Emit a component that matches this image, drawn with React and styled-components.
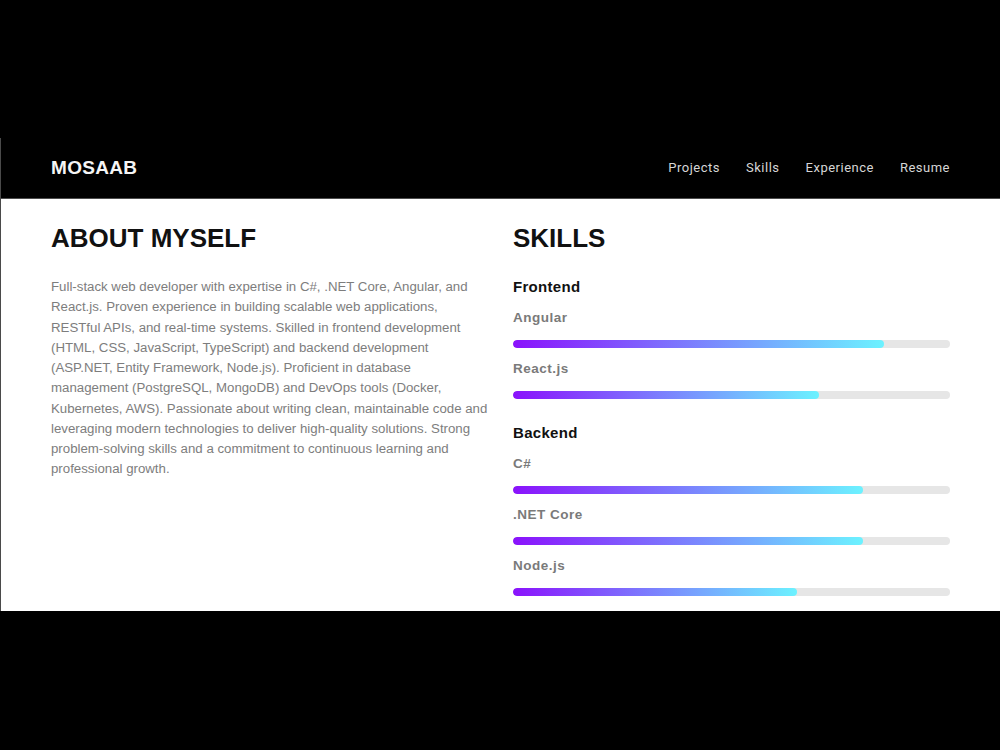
import React from 'react';
import styled, {createGlobalStyle} from "styled-components";

const skillGroups = [
    {
        title: 'Frontend',
        items: [
            {name: 'Angular', level: 85},
            {name: 'React.js', level: 70},
        ],
    },
    {
        title: 'Backend',
        items: [
            {name: 'C#', level: 80},
            {name: '.NET Core', level: 80},
            {name: 'Node.js', level: 65},
        ],
    },
];

const navLinks = ['Projects', 'Skills', 'Experience', 'Resume'];

function App() {
    return (
        <>
            <GlobalStyle/>
            <Frame>
                <Header>
                    <Logo>MOSAAB</Logo>
                    <Nav>
                        {navLinks.map((link) => (
                            <NavLink key={link} href="#">{link}</NavLink>
                        ))}
                    </Nav>
                </Header>
                <Main>
                    <Column>
                        <SectionTitle>ABOUT MYSELF</SectionTitle>
                        <About>
                            Full-stack web developer with expertise in C#, .NET Core, Angular, and
                            React.js. Proven experience in building scalable web applications,
                            RESTful APIs, and real-time systems. Skilled in frontend development
                            (HTML, CSS, JavaScript, TypeScript) and backend development
                            (ASP.NET, Entity Framework, Node.js). Proficient in database
                            management (PostgreSQL, MongoDB) and DevOps tools (Docker,
                            Kubernetes, AWS). Passionate about writing clean, maintainable code and
                            leveraging modern technologies to deliver high-quality solutions. Strong
                            problem-solving skills and a commitment to continuous learning and
                            professional growth.
                        </About>
                    </Column>
                    <Column>
                        <SectionTitle>SKILLS</SectionTitle>
                        <Groups>
                            {skillGroups.map((group) => (
                                <Group key={group.title}>
                                    <GroupTitle>{group.title}</GroupTitle>
                                    {group.items.map((skill) => (
                                        <Skill key={skill.name}>
                                            <SkillName>{skill.name}</SkillName>
                                            <Track>
                                                <Fill style={{width: `${skill.level}%`}}/>
                                            </Track>
                                        </Skill>
                                    ))}
                                </Group>
                            ))}
                        </Groups>
                    </Column>
                </Main>
            </Frame>
        </>
    );
}

const GlobalStyle = createGlobalStyle`
html, body {
margin: 0;
background: #000;
font-family: "Liberation Sans", Arial, sans-serif;
}
* {
box-sizing: border-box;
}
`;

const Frame = styled.div`
margin-top: 138px;
height: 473px;
overflow: hidden;
background: #fff;
border-left: 1px solid #4a4a4a;
display: flex;
flex-direction: column;
`;

const Header = styled.header`
height: 61px;
flex-shrink: 0;
background: #000;
border-bottom: 1px solid #4d4d4d;
display: flex;
align-items: center;
justify-content: space-between;
padding: 0 50px;
`;

const Logo = styled.div`
color: #f5f5f5;
font-size: 19px;
font-weight: bold;
letter-spacing: 0.3px;
`;

const Nav = styled.nav`
display: flex;
gap: 26px;
padding-bottom: 2px;
`;

const NavLink = styled.a`
color: #d6d6d6;
text-decoration: none;
font-family: Roboto, "Liberation Sans", sans-serif;
font-size: 13px;
letter-spacing: 0.5px;
`;

const Main = styled.main`
display: grid;
grid-template-columns: 1fr 1fr;
column-gap: 25px;
padding: 24px 50px 0;
`;

const Column = styled.section`
display: flex;
flex-direction: column;
`;

const SectionTitle = styled.h2`
margin: 0 0 24px;
font-size: 26px;
line-height: 30px;
font-weight: bold;
color: #111;
`;

const About = styled.p`
margin: 0;
font-size: 13.25px;
line-height: 20.25px;
color: #7d7d7d;
`;

const Groups = styled.div`
display: flex;
flex-direction: column;
gap: 24px;
`;

const Group = styled.div`
display: flex;
flex-direction: column;
gap: 11px;
`;

const GroupTitle = styled.h3`
margin: 0;
font-size: 15px;
line-height: 20px;
font-weight: bold;
color: #111;
letter-spacing: 0.3px;
`;

const Skill = styled.div`
display: flex;
flex-direction: column;
gap: 12px;
`;

const SkillName = styled.div`
font-size: 13.5px;
line-height: 20px;
font-weight: bold;
color: #7a7a7a;
letter-spacing: 0.5px;
`;

const Track = styled.div`
height: 8px;
border-radius: 4px;
background: #e6e6e6;
overflow: hidden;
`;

const Fill = styled.div`
height: 100%;
border-radius: 4px;
background: linear-gradient(90deg, #8a12fc 0%, #6cf2ff 100%);
`;

export default App;
